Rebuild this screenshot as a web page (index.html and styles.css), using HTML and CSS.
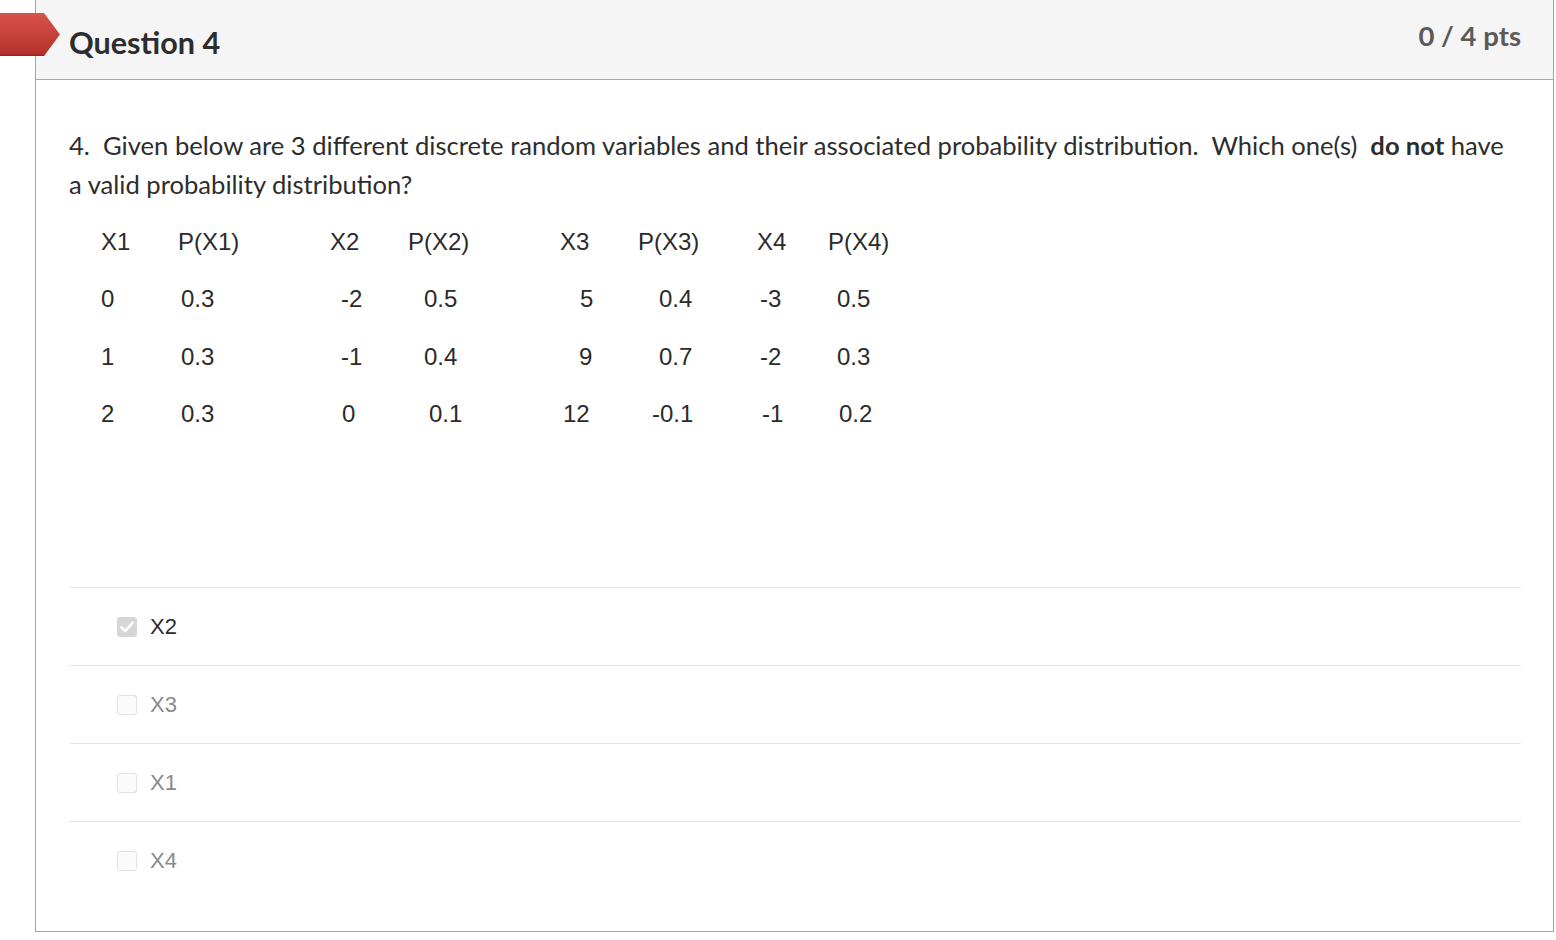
FILE: index.html
```html
<!DOCTYPE html>
<html>
<head>
<meta charset="utf-8">
<link rel="stylesheet" href="styles.css">
</head>
<body>
<div class="page">
  <svg class="flag" width="61" height="45" viewBox="0 0 61 45">
    <defs>
      <linearGradient id="fg" x1="0" y1="0" x2="0" y2="1">
        <stop offset="0" stop-color="#d9534b"/>
        <stop offset="1" stop-color="#b2302a"/>
      </linearGradient>
    </defs>
    <polygon points="0,0 44,0 60,21.5 44,43 0,43" fill="url(#fg)"/>
    <polygon points="0,41.5 45,41.5 44,43 0,43" fill="#9c2420"/>
  </svg>
  <div class="card">
    <div class="header">
      <h2 class="title">Question 4</h2>
      <div class="pts">0 / 4 pts</div>
    </div>
    <div class="body">
      <p class="qtext">4.&nbsp; Given below are 3 different discrete random variables and their associated probability distribution.&nbsp; Which one(s)&nbsp; <b>do not</b> have a valid probability distribution?</p>
      <div class="dist">
        <span>X1</span><span>P(X1)</span><span>X2</span><span>P(X2)</span><span>X3</span><span>P(X3)</span><span>X4</span><span>P(X4)</span>

        <span>0</span><span class="o3">0.3</span><span class="o11">-2</span><span class="o16">0.5</span><span class="o20">5</span><span class="o21">0.4</span><span class="o3">-3</span><span class="o9">0.5</span>

        <span>1</span><span class="o3">0.3</span><span class="o11">-1</span><span class="o16">0.4</span><span class="o19">9</span><span class="o21">0.7</span><span class="o3">-2</span><span class="o9">0.3</span>

        <span>2</span><span class="o3">0.3</span><span class="o12">0</span><span class="o21">0.1</span><span class="o3">12</span><span class="o14">-0.1</span><span class="o5">-1</span><span class="o11">0.2</span>
      </div>
      <ul class="answers">
        <li class="answer selected"><span class="box"><svg width="14" height="12" viewBox="0 0 14 12"><path d="M1.5 6.5 L5.2 10 L12.5 1.8" fill="none" stroke="#fff" stroke-width="2.6" stroke-linecap="round" stroke-linejoin="round"/></svg></span><span class="label">X2</span></li>
        <li class="answer"><span class="box"></span><span class="label">X3</span></li>
        <li class="answer"><span class="box"></span><span class="label">X1</span></li>
        <li class="answer"><span class="box"></span><span class="label">X4</span></li>
      </ul>
    </div>
  </div>
</div>
</body>
</html>
```

FILE: styles.css
```css
html, body {
  margin: 0;
  padding: 0;
  background: #fff;
}
.page {
  position: relative;
  width: 1556px;
  height: 940px;
  padding-left: 35px;
  box-sizing: border-box;
}
.flag {
  position: absolute;
  left: 0;
  top: 13px;
  display: block;
}
.card {
  width: 1519px;
  height: 932px;
  box-sizing: border-box;
  border: 1px solid #a5a5a5;
  border-top: none;
  display: flex;
  flex-direction: column;
}
.header {
  height: 80px;
  box-sizing: border-box;
  background: #f5f5f5;
  border-bottom: 1px solid #a9a9a9;
  display: flex;
  justify-content: space-between;
  padding: 0 32px 0 33px;
  font-family: Lato, "Noto Sans", sans-serif;
}
.title {
  margin: 0;
  font-size: 30.6px;
  font-weight: 700;
  color: #2d2d2d;
  line-height: 1;
  padding-top: 28px;
}
.pts {
  font-size: 27.5px;
  font-weight: 700;
  color: #5a5a5a;
  line-height: 1;
  padding-top: 22px;
}
.body {
  padding: 46px 32px 0 33px;
  font-family: Lato, "Noto Sans", sans-serif;
  color: #2d2d2d;
}
.qtext {
  margin: 0;
  font-size: 25.6px;
  line-height: 39px;
}
.qtext b {
  font-weight: 700;
}
.dist {
  display: grid;
  grid-template-columns: 77px 152px 78px 152px 78px 119px 71px 100px;
  grid-template-rows: 57px 58px 57.5px 57.5px;
  align-items: center;
  margin: 9px 0 0 32px;
  font-family: "Liberation Sans", Arial, sans-serif;
  font-size: 24px;
  color: #2b2b2b;
}
.dist span { white-space: nowrap; }
.o3 { padding-left: 3px; }
.o5 { padding-left: 5px; }
.o9 { padding-left: 9px; }
.o11 { padding-left: 11px; }
.o12 { padding-left: 12px; }
.o14 { padding-left: 14px; }
.o16 { padding-left: 16px; }
.o19 { padding-left: 19px; }
.o20 { padding-left: 20px; }
.o21 { padding-left: 21px; }
.answers {
  list-style: none;
  margin: 143.6px 0 0 0;
  padding: 0;
}
.answer {
  height: 78px;
  box-sizing: border-box;
  border-top: 1px solid #e6e6e6;
  display: flex;
  align-items: center;
  padding: 2px 0 0 48px;
  font-family: "Liberation Sans", Arial, sans-serif;
  font-size: 22px;
  color: #8a8a8a;
}
.box {
  width: 20px;
  height: 20px;
  box-sizing: border-box;
  border: 1px solid #e2e2e2;
  border-radius: 3px;
  background: #fbfbfb;
  margin-right: 13px;
  display: flex;
  align-items: center;
  justify-content: center;
}
.selected .box {
  background: #d6d6d6;
  border-color: #d6d6d6;
}
.selected .label {
  color: #2b2b2b;
}
```
